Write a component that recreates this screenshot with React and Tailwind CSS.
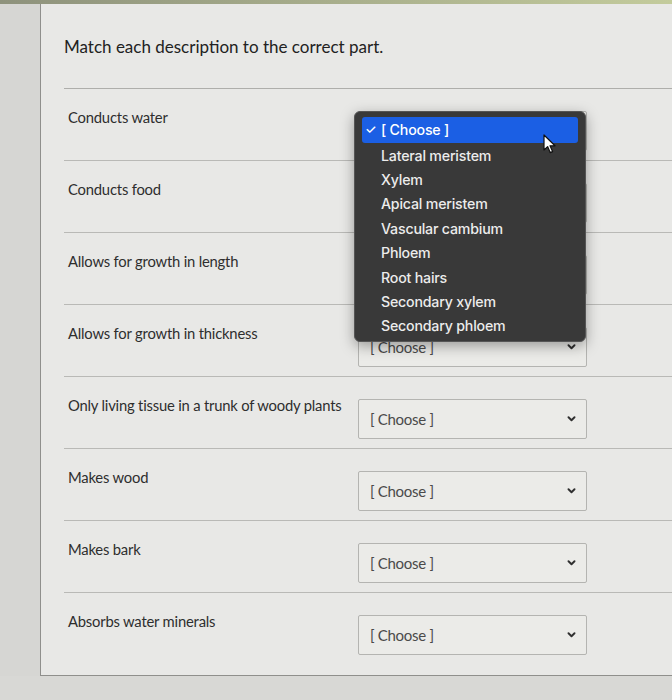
const rows = [
  'Conducts water',
  'Conducts food',
  'Allows for growth in length',
  'Allows for growth in thickness',
  'Only living tissue in a trunk of woody plants',
  'Makes wood',
  'Makes bark',
  'Absorbs water minerals',
];

const options = [
  'Lateral meristem',
  'Xylem',
  'Apical meristem',
  'Vascular cambium',
  'Phloem',
  'Root hairs',
  'Secondary xylem',
  'Secondary phloem',
];

function Chevron() {
  return (
    <svg width="9" height="6" viewBox="0 0 10 7" fill="none">
      <path d="M1.5 1.5 L5 5 L8.5 1.5" stroke="#2f2f2f" strokeWidth="2.2" strokeLinecap="round" strokeLinejoin="round" />
    </svg>
  );
}

// the top rows sit under the open menu, so their text is not shown
function ChooseSelect({ covered }) {
  return (
    <div className="w-[229px] h-[40px] border border-[#b4b4b1] bg-[#ebebe8] rounded-[2px] pl-[11px] pr-[10px] flex items-center justify-between text-[15px] text-[#4a4a4a] tracking-[-0.3px]">
      <span className={covered ? 'invisible' : ''}>[ Choose ]</span>
      <Chevron />
    </div>
  );
}

function Row({ label, last, covered }) {
  return (
    <div className={'pt-[22px] pb-[9px] flex items-start ' + (last ? '' : 'border-b border-[#b9b9b6]')}>
      <div className="w-[294px] pl-[4px] -mt-[4px] text-[14.8px] leading-[20px] text-[#2e2e2e] tracking-[-0.2px]">
        {label}
      </div>
      <ChooseSelect covered={covered} />
    </div>
  );
}

function Menu() {
  return (
    <div
      className="absolute left-[354px] top-[111px] w-[232px] h-[231px] bg-[#393939] rounded-[6px] shadow-[0_4px_14px_rgba(0,0,0,0.35)] border border-[#555] pt-[5px] px-[7px] text-[14.2px] text-[#ececec] tracking-[-0.2px]"
      style={{ fontFamily: 'Inter, "Liberation Sans", sans-serif' }}
    >
      <div className="h-[26px] bg-[#1b5fe4] rounded-[3px] flex items-center pl-[3px] font-medium text-white">
        <span className="w-[16px] text-[13px]">✓</span>
        <span>[ Choose ]</span>
      </div>
      {options.map((o) => (
        <div key={o} className="h-[24.4px] flex items-center pl-[19px] font-medium">
          {o}
        </div>
      ))}
    </div>
  );
}

function Cursor() {
  return (
    <svg className="absolute left-[543px] top-[134px]" width="14" height="20" viewBox="0 0 14 20">
      <path
        d="M1 1 L1 16 L4.6 12.6 L7.2 18.6 L9.6 17.6 L7 11.8 L12 11.8 Z"
        fill="#fff"
        stroke="#111"
        strokeWidth="1.2"
        strokeLinejoin="round"
      />
    </svg>
  );
}

export default function App() {
  return (
    <div
      className="relative w-[672px] h-[700px] overflow-hidden bg-[#d8d8d5]"
      style={{ fontFamily: 'Lato, "Open Sans", sans-serif' }}
    >
      <div className="h-[4px] bg-gradient-to-r from-[#8e927c] to-[#c3cb9c]" />
      <div className="flex">
        <div className="w-[40px] shrink-0 bg-[#d6d6d3]" />
        <div className="flex-1 h-[672px] bg-[#e8e8e6] border-l border-b border-[#8f8f8c]">
          <div className="ml-[23px]">
            <div className="pt-[31px] pb-[29px] text-[17px] leading-[24px] text-[#222] border-b border-[#aeaeab]">
              Match each description to the correct part.
            </div>
            {rows.map((r, i) => (
              <Row key={r} label={r} last={i === rows.length - 1} covered={i < 3} />
            ))}
          </div>
        </div>
      </div>
      <Menu />
      <Cursor />
    </div>
  );
}
